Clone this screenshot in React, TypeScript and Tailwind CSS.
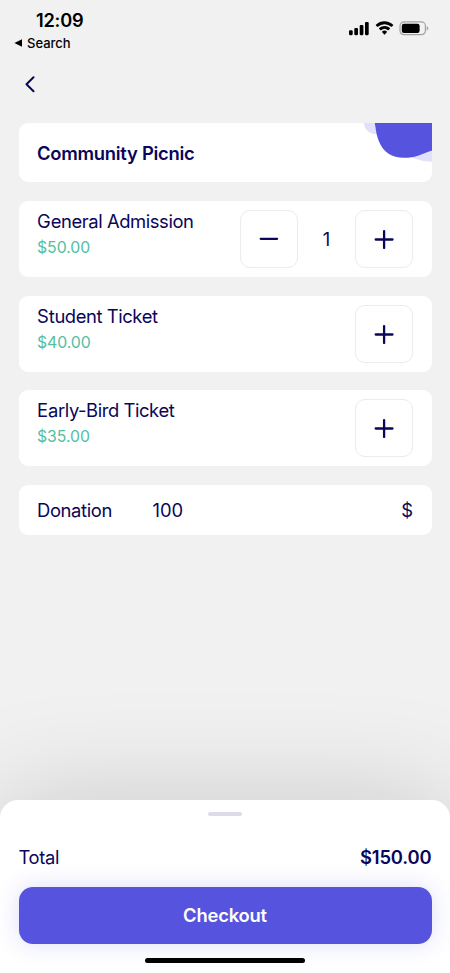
type Ticket = { name: string; price: string; count?: number };

const tickets: Ticket[] = [
  { name: "General Admission", price: "$50.00", count: 1 },
  { name: "Student Ticket", price: "$40.00" },
  { name: "Early-Bird Ticket", price: "$35.00" },
];

function StatusBar() {
  return (
    <header className="flex h-[54px] shrink-0 justify-between text-black">
      <div className="pt-[9px] pl-[14px]">
        <div className="pl-[22px] text-[18.2px] leading-[22px] font-semibold tracking-[-0.2px]">12:09</div>
        <div className="mt-[4px] flex items-center gap-[5px] text-[13px] leading-[16px] font-medium">
          <svg width="8" height="8" viewBox="0 0 8 8" aria-hidden="true">
            <path d="M0.4 4 8 0.2v7.6Z" />
          </svg>
          Search
        </div>
      </div>
      <div className="mt-[21px] flex h-[15px] gap-[6px] pr-[21px]">
        <svg width="20" height="15" viewBox="0 0 20 15" aria-hidden="true">
          <rect x="0" y="9.3" width="3.7" height="4.9" rx="1.1" />
          <rect x="5.3" y="7" width="3.7" height="7.2" rx="1.1" />
          <rect x="10.7" y="4" width="3.7" height="10.2" rx="1.1" />
          <rect x="16" y="1" width="3.7" height="13.2" rx="1.1" />
        </svg>
        <svg width="19" height="15" viewBox="0 0 19 15" aria-hidden="true">
          <path d="M9.5 0.3c3.3 0 6.3 1.3 8.6 3.4.2.2.2.5 0 .7l-1.3 1.3c-.2.2-.5.2-.7 0A9.7 9.7 0 0 0 9.5 3.2a9.7 9.7 0 0 0-6.6 2.5c-.2.2-.5.2-.7 0L.9 4.4c-.2-.2-.2-.5 0-.7A12.6 12.6 0 0 1 9.5.3Z" />
          <path d="M9.5 5c2.1 0 4 .8 5.4 2.1.2.2.2.5 0 .7l-1.4 1.4c-.2.2-.5.2-.7 0a4.9 4.9 0 0 0-6.6 0c-.2.2-.5.2-.7 0L4.1 7.8c-.2-.2-.2-.5 0-.7A8 8 0 0 1 9.5 5Z" />
          <path d="M9.5 9.6c.9 0 1.7.3 2.3.9.2.2.2.5 0 .7l-2 2.3c-.2.2-.4.2-.6 0l-2-2.3c-.2-.2-.2-.5 0-.7.6-.6 1.4-.9 2.3-.9Z" />
        </svg>
        <svg className="-ml-px" width="30" height="15" viewBox="0 0 30 15" aria-hidden="true">
          <rect x="1" y="0.9" width="25.4" height="12.8" rx="4" fill="none" stroke="#a2a2a2" strokeWidth="1.2" />
          <rect x="2.8" y="2.7" width="17.8" height="9.2" rx="2.2" />
          <path d="M27.7 5.2c1.1.4 1.6 1.2 1.6 2.1s-.5 1.7-1.6 2.1Z" fill="#a2a2a2" />
        </svg>
      </div>
    </header>
  );
}

function StepButton({ kind }: { kind: "plus" | "minus" }) {
  return (
    <button
      aria-label={kind}
      className="flex size-[58px] items-center justify-center rounded-[10px] border border-[#ebebf0] bg-white"
    >
      <svg width="20" height="20" viewBox="0 0 20 20" fill="none" stroke="#0a0659" strokeWidth="2.3" strokeLinecap="round">
        {kind === "plus" ? <path d="M1.7 10.5h16.8M10.1 2.1v16.8" /> : <path d="M1.7 9.8h16.4" />}
      </svg>
    </button>
  );
}

function TicketRow({ name, price, count }: Ticket) {
  return (
    <div className="flex h-[76.1px] justify-between rounded-[9px] bg-white px-[18.5px] pt-[9px]">
      <div className="-mt-px">
        <div className="text-[18.4px] leading-[24px] tracking-[-0.42px] first-letter:tracking-normal">{name}</div>
        <div className="mt-[4px] text-[15.8px] leading-[22px] tracking-[-0.05px] text-[#54bea2]">{price}</div>
      </div>
      <div className="flex items-center self-start">
        {count !== undefined && (
          <>
            <StepButton kind="minus" />
            <span className="w-[57px] text-center text-[18.4px] leading-[24px]">{count}</span>
          </>
        )}
        <StepButton kind="plus" />
      </div>
    </div>
  );
}

export default function App() {
  return (
    <div className="flex h-[973px] w-[450px] flex-col overflow-hidden bg-[#f1f1f1] font-['Inter','Liberation_Sans',sans-serif] text-[#0a0659]">
      <StatusBar />
      <nav className="flex h-[69.3px] shrink-0 pt-[22px] pl-[24px]">
        <svg width="12" height="17" viewBox="0 0 12 17" fill="none" stroke="#0a0659" strokeWidth="2" strokeLinecap="round" strokeLinejoin="round">
          <path d="M9.5 1.2 2.5 8.2l7 7" />
        </svg>
      </nav>
      <main className="flex flex-1 flex-col gap-[18.5px] px-[18.5px]">
        <section className="flex h-[59.2px] items-center justify-between rounded-[9px] rounded-tr-none bg-white pl-[18.5px]">
          <h1 className="text-[18.4px] leading-[24px] font-semibold tracking-[-0.26px]">Community Picnic</h1>
          <svg className="self-start" width="70" height="40" viewBox="0 0 70 40" aria-hidden="true">
            <path d="M1.8 0C2.4 7.5 8 11.3 15 11.3V0Z" fill="#e2e1fb" />
            <path d="M46 32C53 36.5 61 38.6 70 38.7V25Z" fill="#e2e1fb" />
            <path d="M12.7 0C14 6 14 11 17 18.5C21.5 29.5 30 34.8 41.8 34.8C54 34.8 60 30.8 70 27.4V0Z" fill="#5654de" />
          </svg>
        </section>
        {tickets.map((t) => (
          <TicketRow key={t.name} {...t} />
        ))}
        <section className="flex h-[50.4px] items-center rounded-[9px] bg-white px-[18.5px] text-[18.4px] leading-[24px]">
          <span className="w-[115.5px] tracking-[-0.37px]">Donation</span>
          <span>100</span>
          <span className="ml-auto">$</span>
        </section>
      </main>
      <footer className="flex h-[173px] shrink-0 flex-col items-center rounded-t-[18px] bg-white px-[18.5px] pt-[11.5px] shadow-[0_0_110px_rgba(0,0,0,0.17)]">
        <div className="h-[4.5px] w-[34px] shrink-0 rounded-full bg-[#dcdce8]" />
        <div className="mt-[28.5px] flex w-full justify-between text-[18.4px] leading-[24px]">
          <span className="tracking-[-0.35px]">Total</span>
          <span className="font-semibold tracking-[-0.15px]">$150.00</span>
        </div>
        <button className="mt-[18px] h-[57.5px] w-full shrink-0 rounded-[14px] bg-[#5654de] pt-[2px] text-[18.4px] font-semibold tracking-[-0.2px] text-white shadow-[0_0_23px_rgba(86,84,222,0.2)]">
          Checkout
        </button>
        <div className="mt-[13.5px] h-[5.5px] w-[160px] shrink-0 rounded-full bg-black" />
      </footer>
    </div>
  );
}
